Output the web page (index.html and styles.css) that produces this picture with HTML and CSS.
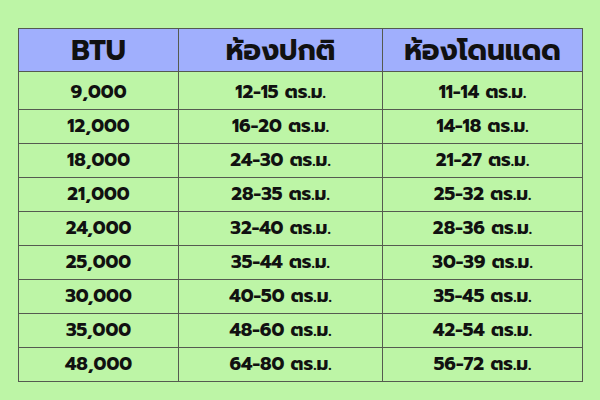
FILE: index.html
```html
<!DOCTYPE html>
<html lang="th">
<head>
<meta charset="utf-8">
<link rel="stylesheet" href="styles.css">
</head>
<body>
<div class="page">
<table class="btu">
<thead>
<tr><th class="c1">BTU</th><th class="c2">ห้องปกติ</th><th class="c3">ห้องโดนแดด</th></tr>
</thead>
<tbody>
<tr class="first"><td>9,000</td><td>12-15 ตร.ม.</td><td>11-14 ตร.ม.</td></tr>
<tr><td>12,000</td><td>16-20 ตร.ม.</td><td>14-18 ตร.ม.</td></tr>
<tr><td>18,000</td><td>24-30 ตร.ม.</td><td>21-27 ตร.ม.</td></tr>
<tr><td>21,000</td><td>28-35 ตร.ม.</td><td>25-32 ตร.ม.</td></tr>
<tr><td>24,000</td><td>32-40 ตร.ม.</td><td>28-36 ตร.ม.</td></tr>
<tr><td>25,000</td><td>35-44 ตร.ม.</td><td>30-39 ตร.ม.</td></tr>
<tr><td>30,000</td><td>40-50 ตร.ม.</td><td>35-45 ตร.ม.</td></tr>
<tr><td>35,000</td><td>48-60 ตร.ม.</td><td>42-54 ตร.ม.</td></tr>
<tr><td>48,000</td><td>64-80 ตร.ม.</td><td>56-72 ตร.ม.</td></tr>
</tbody>
</table>
</div>
</body>
</html>
```
FILE: styles.css
```css
html, body {
  margin: 0;
  padding: 0;
  background: #bdf5a6;
}
.page {
  width: 600px;
  height: 400px;
  padding: 28px 0 0 18px;
  box-sizing: border-box;
}
.btu {
  border-collapse: collapse;
  table-layout: fixed;
  width: 563px;
  font-family: "Prompt", "Kanit", "Noto Sans Thai", "Noto Sans Thai UI", "DejaVu Sans", sans-serif;
  color: #111;
}
.btu th, .btu td {
  border: 1px solid #555a50;
  text-align: center;
  padding: 0;
  font-weight: 700;
  line-height: 1;
}
.btu th {
  background: #a0affd;
  height: 40px;
  padding-top: 2px;
  font-size: 28px;
}
.btu td {
  height: 33px;
  font-size: 18.5px;
}
.btu tr.first td {
  height: 34px;
  padding-top: 3px;
}
.c1 { width: 159px; }
.c2 { width: 203px; }
.c3 { width: 199px; }
```
